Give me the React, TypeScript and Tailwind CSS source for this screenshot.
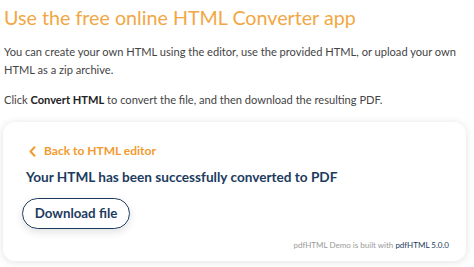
const font = { fontFamily: "Lato, 'Open Sans', sans-serif" };

export default function App() {
  return (
    <div className="w-[474px] h-[267px] overflow-hidden bg-white text-[#333]" style={font}>
      <div className="px-[4px] pt-[4px]">
        <h1 className="text-[19.7px] leading-[28px] font-normal text-[#f2a744]">
          Use the free online HTML Converter app
        </h1>
        <p className="mt-[11px] text-[11.1px] leading-[18px] text-[#444]">
          You can create your own HTML using the editor, use the provided HTML, or upload your own
          HTML as a zip archive.
        </p>
        <p className="mt-[12px] text-[11.1px] leading-[18px] text-[#444]">
          Click <b className="font-bold text-[#222]">Convert HTML</b> to convert the file, and then
          download the resulting PDF.
        </p>
      </div>

      <div className="mx-[3px] mt-[13px] w-[463px] h-[139px] rounded-[12px] bg-white shadow-[0_1px_8px_rgba(0,0,0,0.12)] pl-[23px] pt-[20px] flex flex-col">
        <a className="flex items-center gap-[8px] text-[12px] leading-[18px] font-bold text-[#f39a2e]">
          <svg width="7" height="11" viewBox="0 0 7 11" className="ml-[3px]">
            <path d="M5.5 1.2 L1.5 5.5 L5.5 9.8" fill="none" stroke="#f39a2e" strokeWidth="2" strokeLinecap="round" strokeLinejoin="round" />
          </svg>
          Back to HTML editor
        </a>
        <div className="mt-[7px] text-[13.6px] leading-[20px] font-bold text-[#1c3b5e]">
          Your HTML has been successfully converted to PDF
        </div>
        <div className="mt-[11px] -ml-[4px]">
          <button className="h-[31px] w-[108px] rounded-full border border-[#1c3b5e] text-[13.3px] font-bold text-[#1c3b5e] shadow-[0_3px_8px_rgba(0,0,0,0.12)]">
            Download file
          </button>
        </div>
        <div className="mt-auto mb-[10px] mr-[17px] text-right text-[8px] text-[#999]">
          pdfHTML Demo is built with <span className="text-[#1c3b5e]">pdfHTML 5.0.0</span>
        </div>
      </div>
    </div>
  );
}
